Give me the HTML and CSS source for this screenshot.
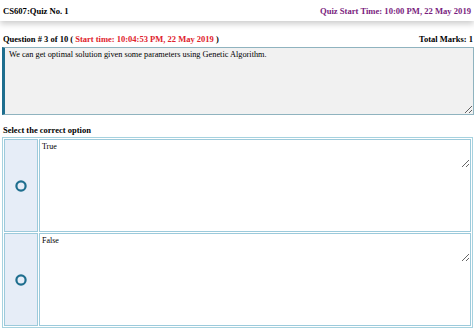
FILE: index.html
```html
<!DOCTYPE html>
<html>
<head>
<meta charset="utf-8">
<link rel="stylesheet" href="styles.css">
</head>
<body>
<header class="topbar">
  <span class="quiz-title">CS607:Quiz No. 1</span>
  <span class="quiz-start">Quiz Start Time: 10:00 PM, 22 May 2019</span>
</header>
<main class="content">
  <div class="qline">
    <span class="qnum">Question # 3 of 10 ( <span class="start">Start time: 10:04:53 PM, 22 May 2019</span> )</span>
    <span class="marks">Total Marks: 1</span>
  </div>
  <textarea class="qtext" readonly>We can get optimal solution given some parameters using Genetic Algorithm.</textarea>
  <div class="select">Select the correct option</div>
  <table class="options">
    <tr>
      <td class="radio-cell"><svg class="radio" width="12" height="12" viewBox="0 0 12 12"><circle cx="6" cy="6" r="4.6" fill="none" stroke="#1e6e8e" stroke-width="2.2"/></svg></td>
      <td class="answer-cell"><textarea class="answer" readonly>True</textarea></td>
    </tr>
    <tr>
      <td class="radio-cell"><svg class="radio" width="12" height="12" viewBox="0 0 12 12"><circle cx="6" cy="6" r="4.6" fill="none" stroke="#1e6e8e" stroke-width="2.2"/></svg></td>
      <td class="answer-cell"><textarea class="answer" readonly>False</textarea></td>
    </tr>
  </table>
</main>
</body>
</html>
```
FILE: styles.css
```css
html, body {
  margin: 0;
  padding: 0;
  background: #ffffff;
  font-family: "Liberation Serif", "Times New Roman", serif;
  color: #000;
}
.topbar {
  display: flex;
  justify-content: space-between;
  align-items: center;
  height: 21px;
  padding: 0 3px 0 3px;
  background: #fff;
  box-shadow: 0 3px 6px rgba(0,0,0,0.2);
  font-weight: bold;
  font-size: 8.6px;
}
.quiz-start {
  color: #7a1d7e;
}
.content {
  padding: 12px 0 0 2px;
}
.qline {
  display: flex;
  justify-content: space-between;
  font-weight: bold;
  font-size: 8.5px;
  padding: 0 1px 0 1px;
  line-height: 12px;
}
.start {
  color: #e0222b;
}
.qtext {
  display: block;
  box-sizing: border-box;
  width: 472px;
  height: 68px;
  margin: 2px 0 0 0;
  padding: 2px 4px;
  border: 1px solid #8fb3bf;
  border-left: 3px solid #1e6e8e;
  background: #f1f1f1;
  font-family: "Liberation Serif", "Times New Roman", serif;
  font-size: 8.3px;
  color: #000;
  outline: none;
}
.select {
  font-weight: bold;
  font-size: 8.5px;
  margin: 9px 0 0 1px;
  line-height: 12px;
}
.options {
  border-collapse: separate;
  border-spacing: 1px;
  border: 1px solid #a6d2df;
  width: 471px;
  margin-top: 1px;
}
.options td {
  border: 1px solid #9ccadb;
  padding: 0;
  height: 91px;
  vertical-align: top;
}
.radio-cell {
  width: 32px;
  background: #e6edf7;
  text-align: center;
  vertical-align: middle !important;
}
.radio {
  display: block;
  margin: 0 auto;
}
.answer-cell {
  background: #fff;
}
.answer {
  display: block;
  box-sizing: border-box;
  width: 100%;
  height: 28px;
  border: none;
  padding: 2px 2px;
  font-family: "Liberation Serif", "Times New Roman", serif;
  font-size: 8px;
  color: #000;
  background: transparent;
  outline: none;
}
```
